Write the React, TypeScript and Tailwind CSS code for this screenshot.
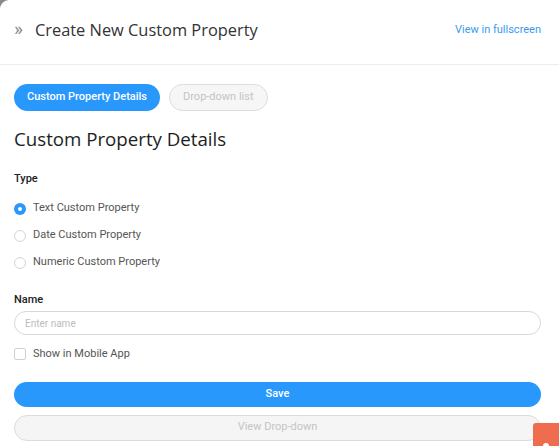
import * as React from 'react';

const FormPanel: React.FC = () => {
  const [type, setType] = React.useState('text');

  const options = [
    { id: 'text', label: 'Text Custom Property' },
    { id: 'date', label: 'Date Custom Property' },
    { id: 'numeric', label: 'Numeric Custom Property' },
  ];

  return (
    <div className="relative h-[446px] w-[559px] overflow-hidden bg-[#8a8a8a]" style={{ fontFamily: 'Roboto, "Noto Sans", sans-serif' }}>
      <div className="h-full w-full rounded-tl-[9px] bg-white">
        {/* Header */}
        <div className="flex h-[65px] items-center justify-between border-b border-[#ececec] pb-[3px] pl-[14px] pr-[18px]">
          <div className="flex items-center gap-[12px]">
            <span className="-mt-[3px] text-[19px] leading-none text-[#8a8a8a]">»</span>
            <h1 className="text-[16.4px] text-[#333]" style={{ fontFamily: '"Open Sans", sans-serif' }}>
              Create New Custom Property
            </h1>
          </div>
          <a className="text-[11px] text-[#3a9bf0]">View in fullscreen</a>
        </div>

        <div className="pl-[14px] pr-[18px] pt-[19px]">
          {/* Tabs */}
          <div className="flex gap-[9px]">
            <button className="h-[27px] rounded-full bg-[#2898fd] px-[13px] text-[11px] font-medium text-white">
              Custom Property Details
            </button>
            <button className="h-[27px] rounded-full border border-[#dcdcdc] bg-[#f6f6f6] px-[13px] text-[11px] text-[#c4c4c4]">
              Drop-down list
            </button>
          </div>

          <h2 className="mt-[14px] text-[18.7px] text-[#1e1e1e]" style={{ fontFamily: '"Open Sans", sans-serif' }}>
            Custom Property Details
          </h2>

          {/* Type */}
          <div className="mt-[18px] text-[11px] font-medium text-[#222]">Type</div>
          <div className="mt-[13px] flex flex-col gap-[11px]">
            {options.map((o) => (
              <label key={o.id} className="flex h-[16px] cursor-pointer items-center gap-[7px]" onClick={() => setType(o.id)}>
                {type === o.id ? (
                  <span className="flex h-[12px] w-[12px] items-center justify-center rounded-full bg-[#2898fd]">
                    <span className="h-[4px] w-[4px] rounded-full bg-white" />
                  </span>
                ) : (
                  <span className="h-[12px] w-[12px] rounded-full border border-[#d4d4d4] bg-white" />
                )}
                <span className="text-[11px] text-[#555]">{o.label}</span>
              </label>
            ))}
          </div>

          {/* Name */}
          <div className="mt-[21px] text-[11px] font-medium text-[#222]">Name</div>
          <input
            placeholder="Enter name"
            className="mt-[3px] h-[24px] w-full rounded-full border border-[#d8d8d8] px-[10px] text-[10px] outline-none placeholder:text-[#bcbcbc]"
          />

          <label className="mt-[11px] flex items-center gap-[7px]">
            <span className="h-[12px] w-[12px] rounded-[2px] border border-[#d0d0d0] bg-white" />
            <span className="text-[11px] text-[#555]">Show in Mobile App</span>
          </label>

          {/* Actions */}
          <button className="mt-[19px] h-[25px] w-full rounded-full bg-[#2898fd] text-[11px] font-medium text-white">
            Save
          </button>
          <button className="mt-[8px] h-[26px] w-full rounded-full border border-[#dcdcdc] bg-[#f5f5f5] text-[11px] text-[#c4c4c4]">
            View Drop-down
          </button>
        </div>
      </div>

      {/* Floating widget */}
      <div className="absolute bottom-0 right-0 flex h-[23px] w-[26px] items-end justify-center rounded-tl-[3px] bg-[#ef6c4f]">
        <span className="mb-[-3px] h-[6px] w-[6px] rounded-full bg-white" />
      </div>
    </div>
  );
};

export default function App() {
  return <FormPanel />;
}
